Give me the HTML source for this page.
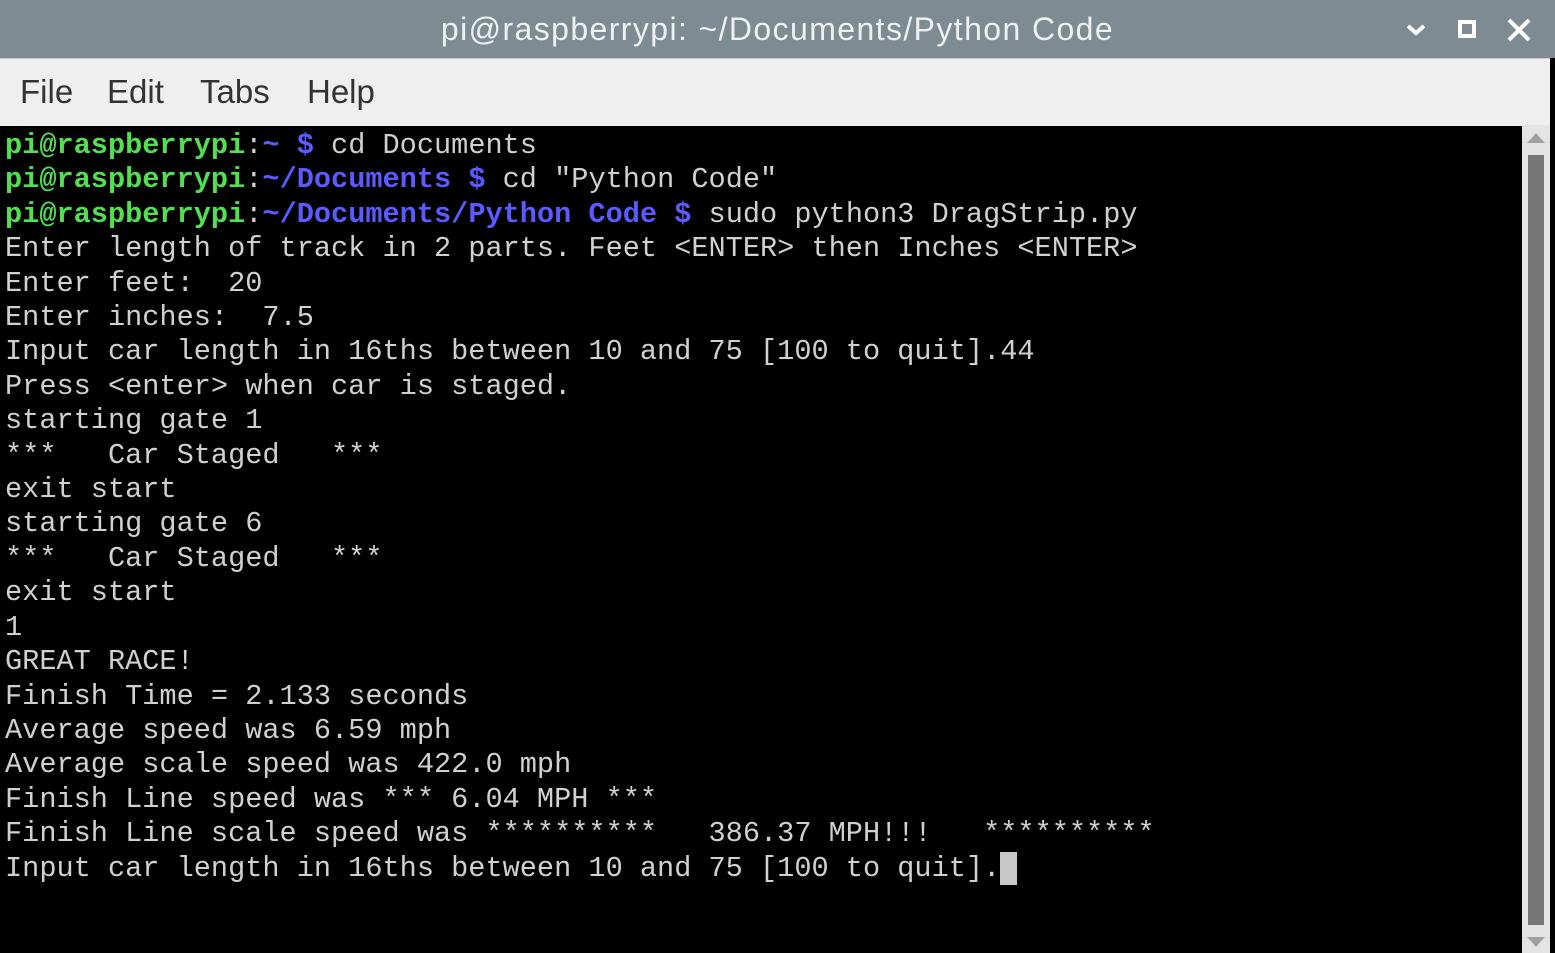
<!DOCTYPE html>
<html><head><meta charset="utf-8"><style>
*{margin:0;padding:0}
body{width:1555px;height:953px;background:#000;overflow:hidden;position:relative;font-family:"Liberation Sans",sans-serif}
#title{position:absolute;left:0;top:0;width:1555px;height:58px;background:#7e8b93;color:#eef0f1;font-size:32px;text-align:center;line-height:58px;letter-spacing:1.4px}
#menu{position:absolute;left:0;top:58px;width:1550px;height:67px;background:#efefef;border-top:1px solid #c9cdd0;color:#333;font-size:33px;line-height:66px}
#menu span{position:absolute;top:0}
#term{position:absolute;left:5px;top:129px;font-family:"Liberation Mono",monospace;font-size:28.6px;line-height:34.4px;color:#d0d0d0;white-space:pre}
.g{color:#52e052;font-weight:bold}.b{color:#5a5aff;font-weight:bold}
#sb{position:absolute;left:1522px;top:125px;width:28px;height:828px;background:#e4e4e4}
#thumb{position:absolute;left:1528px;top:155px;width:16px;height:770px;background:#767676}
.cur{background:#c8c8c8}
</style></head><body>
<div id="title">pi@raspberrypi: ~/Documents/Python Code</div>
<svg style="position:absolute;left:1405px;top:18px" width="130" height="24">
<path d="M3 8 L11 15 L19 8" stroke="#fff" stroke-width="4" fill="none"/>
<rect x="55" y="4" width="14" height="14" stroke="#fff" stroke-width="4" fill="none"/>
<path d="M104 2 L124 22 M124 2 L104 22" stroke="#fff" stroke-width="4"/>
</svg>
<div id="menu"><span style="left:20px">File</span><span style="left:107px">Edit</span><span style="left:200px">Tabs</span><span style="left:307px">Help</span></div>
<div id="term"><span class="g">pi@raspberrypi</span>:<span class="b">~ $</span> cd Documents
<span class="g">pi@raspberrypi</span>:<span class="b">~/Documents $</span> cd "Python Code"
<span class="g">pi@raspberrypi</span>:<span class="b">~/Documents/Python Code $</span> sudo python3 DragStrip.py
Enter length of track in 2 parts. Feet &lt;ENTER&gt; then Inches &lt;ENTER&gt;
Enter feet:  20
Enter inches:  7.5
Input car length in 16ths between 10 and 75 [100 to quit].44
Press &lt;enter&gt; when car is staged.
starting gate 1
***   Car Staged   ***
exit start
starting gate 6
***   Car Staged   ***
exit start
1
GREAT RACE!
Finish Time = 2.133 seconds
Average speed was 6.59 mph
Average scale speed was 422.0 mph
Finish Line speed was *** 6.04 MPH ***
Finish Line scale speed was **********   386.37 MPH!!!   **********
Input car length in 16ths between 10 and 75 [100 to quit].<span class="cur"> </span></div>
<div id="sb"></div><div id="thumb"></div>
<svg style="position:absolute;left:1524px;top:130px" width="24" height="16"><path d="M3 13 L12 3 L21 13Z" fill="#a0a0a0"/></svg>
<svg style="position:absolute;left:1524px;top:934px" width="24" height="16"><path d="M3 3 L12 13 L21 3Z" fill="#a0a0a0"/></svg>
</body></html>
